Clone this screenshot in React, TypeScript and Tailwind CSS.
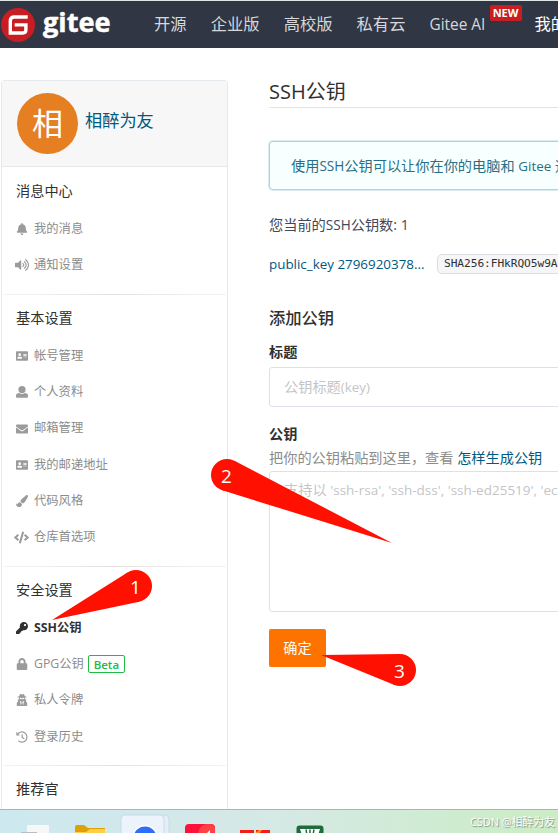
import type { ReactNode } from "react";
import {
  FaAddressCard,
  FaBell,
  FaCode,
  FaEnvelope,
  FaKey,
  FaLock,
  FaPaintBrush,
  FaUserSecret,
  FaVolumeUp,
} from "react-icons/fa";

type MenuItem = { label: string; icon: ReactNode; active?: boolean; badge?: string };

const navLinks = ["开源", "企业版", "高校版", "私有云"];

const menuSections: { title: string; items: MenuItem[] }[] = [
  {
    title: "消息中心",
    items: [
      { label: "我的消息", icon: <FaBell /> },
      { label: "通知设置", icon: <FaVolumeUp className="size-[14px]" /> },
    ],
  },
  {
    title: "基本设置",
    items: [
      { label: "帐号管理", icon: <FaAddressCard /> },
      { label: "个人资料", icon: <UserIcon /> },
      { label: "邮箱管理", icon: <FaEnvelope /> },
      { label: "我的邮递地址", icon: <FaAddressCard /> },
      { label: "代码风格", icon: <FaPaintBrush /> },
      { label: "仓库首选项", icon: <FaCode className="size-[15px]" /> },
    ],
  },
  {
    title: "安全设置",
    items: [
      { label: "SSH公钥", icon: <FaKey />, active: true },
      { label: "GPG公钥", icon: <FaLock />, badge: "Beta" },
      { label: "私人令牌", icon: <FaUserSecret /> },
      { label: "登录历史", icon: <HistoryIcon /> },
    ],
  },
];

const callouts = [
  { label: "1", cx: 136, cy: 586, tipX: 52, tipY: 620 },
  { label: "2", cx: 227, cy: 475, tipX: 392, tipY: 543 },
  { label: "3", cx: 400, cy: 670, tipX: 321, tipY: 655 },
];

function UserIcon() {
  return (
    <svg viewBox="0 0 12 12" className="size-3" fill="currentColor">
      <circle cx="6" cy="3.6" r="3.6" />
      <path d="M3.2 6.9Q6 9 8.8 6.9L10.7 7.6Q12 8.1 12 9.5V10.8Q12 11.7 11.1 11.7H.9Q0 11.7 0 10.8V9.5Q0 8.1 1.3 7.6Z" />
    </svg>
  );
}

function HistoryIcon() {
  return (
    <svg
      viewBox="0 0 12 12"
      className="size-3"
      fill="none"
      stroke="currentColor"
      strokeWidth="1.2"
    >
      <path d="M1.6 3.2A5.1 5.1 0 1 1 2.4 9.8M6.2 3.2V6.4L8.2 7.8" />
      <path d="M.3 .8V4.4H3.9Z" fill="currentColor" stroke="none" />
    </svg>
  );
}

function Logo() {
  return (
    <div className="flex w-[154px] shrink-0 items-center">
      <svg viewBox="0 0 34 34" className="ml-[1px] size-[34px] shrink-0">
        <circle cx="17" cy="17" r="17" fill="#c71d23" />
        <path
          d="M26.7 9H13.2Q9.3 9 9.3 12.9V25H21.7Q24.9 25 24.9 21.8V16.9H13.7"
          fill="none"
          stroke="#fff"
          strokeWidth="3.4"
        />
      </svg>
      <span className="relative -top-[3px] ml-[8px] text-[27.2px] font-bold leading-none text-white [-webkit-text-stroke:0.5px_#fff]">
        gitee
      </span>
    </div>
  );
}

function TopNav() {
  return (
    <header className="flex h-12 items-center overflow-hidden whitespace-nowrap border-t border-[#dfe6e6] bg-[#303643] text-[16.3px] text-[#d6d8dc]">
      <Logo />
      <nav className="flex items-center gap-[24.1px]">
        {navLinks.map((link) => (
          <a key={link}>{link}</a>
        ))}
        <a className="relative text-[15.4px]">
          Gitee AI
          <span className="absolute -top-[8px] left-[60px] flex h-4 w-8 items-center justify-center rounded-[2px] bg-[#c71d23] text-[11px] font-bold text-white">
            NEW
          </span>
        </a>
        <a className="ml-[25px] text-white">我的</a>
      </nav>
    </header>
  );
}

function Sidebar() {
  return (
    <aside className="ml-px mt-8 w-[227px] shrink-0 rounded-t border border-b-0 border-[#e3e9ed]">
      <div className="mb-px flex h-[86px] border-b border-[#e3e9ed] bg-[#f7f7f7] pl-[15px] pt-3">
        <div className="flex size-[61px] items-center justify-center rounded-full bg-[#e67e22] text-[31px] text-white">
          相
        </div>
        <a className="ml-[7px] pt-[14px] text-[17.2px] leading-7 text-[#005980]">相醉为友</a>
      </div>
      {menuSections.map((section) => (
        <section key={section.title}>
          <h4 className="h-[43px] pl-[14px] pt-[13px] text-[14.2px] leading-5 text-[#303030]">
            {section.title}
          </h4>
          {section.items.map((item) => (
            <a
              key={item.label}
              className={`flex h-[36.3px] items-center text-[12.3px] ${
                item.active ? "font-bold text-[#303030]" : "text-[#8c8c8c]"
              }`}
            >
              <span
                className={`ml-3 flex w-[15px] justify-center text-[12px] ${
                  item.active ? "text-[#303030]" : "text-[#9b9b9b]"
                }`}
              >
                {item.icon}
              </span>
              <span className="ml-[5px]">{item.label}</span>
              {item.badge && (
                <span className="ml-1 flex h-[18px] w-[37px] items-center justify-center rounded-[2px] border border-[#21ba45] text-[11.5px] font-semibold text-[#21ba45]">
                  {item.badge}
                </span>
              )}
            </a>
          ))}
          <div className="mx-px mt-[10.2px] h-px bg-gradient-to-r from-[#f4f4f4] via-[#e2e2e2] to-[#f4f4f4]" />
        </section>
      ))}
      <h4 className="pl-[14px] pt-[13px] text-[14.2px] leading-5 text-[#303030]">推荐官</h4>
    </aside>
  );
}

function KeySettings() {
  return (
    <main className="ml-[41px] mt-8 w-[400px] shrink-0 whitespace-nowrap text-[14.2px] text-[#40485b]">
      <h2 className="h-7 border-b border-[#e0e3e5] text-[20px] leading-[23px] text-[#303030]">
        SSH公钥
      </h2>
      <div className="mt-[33px] h-[49px] rounded border border-[#a9d5de] bg-[#f8ffff] pl-[21px] leading-[47px] text-[#276f86] shadow-[0_0_0_1px_#d9ecf0]">
        使用<span className="text-[13.6px]">SSH</span>公钥可以让你在你的电脑和{" "}
        <span className="text-[13.4px]">Gitee</span> 通讯的时候使用安全连接
      </div>
      <p className="mt-[23px] leading-6">
        您当前的<span className="text-[13.6px]">SSH</span>公钥数: 1
      </p>
      <div className="mt-[15px] flex h-6 items-center">
        <a className="w-[168px] text-[13.4px] text-[#005980]">public_key 2796920378...</a>
        <code className="flex h-5 items-center rounded-[5px] border border-[#dcdce2] bg-[#f6f6f8] pl-1.5 font-['DejaVu_Sans_Mono',monospace] text-[11.2px] tracking-[-0.06px] text-[#303030]">
          SHA256:FHkRQO5w9AJk3Lm8
        </code>
      </div>
      <h3 className="mt-[30px] text-[16.3px] font-medium leading-6 text-[#303030]">添加公钥</h3>
      <label className="mt-3 block font-bold leading-5 text-[#303030]">标题</label>
      <div className="mt-[5px] h-10 rounded-[3px] border border-[#dde0e6] pl-[14px] leading-[37px] text-[#c5c5c7]">
        公钥标题<span className="text-[13.4px]">(key)</span>
      </div>
      <label className="mt-[17px] block font-bold leading-5 text-[#303030]">公钥</label>
      <p className="mt-[4px] leading-5 text-[#8c8c8c]">
        把你的公钥粘贴到这里，查看 <a className="text-[#005980]">怎样生成公钥</a>
      </p>
      <div className="mt-[3px] h-[141px] rounded-[3px] border border-[#dde0e6] pl-[14px] pt-2 leading-5 text-[#c5c5c7]">
        支持以{" "}
        <span className="text-[13.5px]">
          'ssh-rsa', 'ssh-dss', 'ssh-ed25519', 'ecdsa-sha2-nistp256'
        </span>
      </div>
      <button className="mt-[17px] h-[38px] w-[57px] rounded-[2px] bg-[#fe7300] text-white">
        确定
      </button>
    </main>
  );
}

function Callouts() {
  const r = 16;
  return (
    <svg className="pointer-events-none absolute inset-0" width="558" height="833">
      {callouts.map(({ label, cx, cy, tipX, tipY }) => {
        // the wedge runs from the tip to both tangent points of the circle
        const distance = Math.hypot(tipX - cx, tipY - cy);
        const heading = Math.atan2(tipY - cy, tipX - cx);
        const spread = Math.acos(r / distance);
        const points = [heading - spread, heading + spread].map(
          (a) => `${cx + r * Math.cos(a)},${cy + r * Math.sin(a)}`,
        );
        return (
          <g key={label} fill="#ff1000">
            <circle cx={cx} cy={cy} r={r} />
            <polygon points={`${tipX},${tipY} ${points.join(" ")}`} />
            <text x={cx - 0.5} y={cy + 8} fill="#fff" fontSize="19" textAnchor="middle">
              {label}
            </text>
          </g>
        );
      })}
    </svg>
  );
}

function Taskbar() {
  return (
    <footer className="relative h-6 overflow-hidden border-t border-[#a9b5b8] bg-gradient-to-r from-[#cde8f0] via-[#d5e9e5] to-[#cbedc4]">
      <svg width="558" height="23" className="block">
        <rect x="27" y="15" width="22" height="12" rx="1" fill="#f7f7f7" />
        <rect x="21" y="22" width="16" height="4" fill="#b5bec2" />
        <path d="M75 25V17Q75 15 77 15H84L88 18H105V25Z" fill="#dda106" />
        <path d="M75 25V22H86L90 19H105V25Z" fill="#ffcd46" />
        <rect x="123" y="5" width="46" height="30" rx="4" fill="#e5edf7" stroke="#c9d9e6" />
        <rect x="121" y="5" width="43" height="30" rx="4" fill="#edf3fb" stroke="#c9dce8" />
        <circle cx="145" cy="28" r="13" fill="#fff" />
        <circle cx="145" cy="28" r="11.5" fill="#2f6dfa" />
        <rect x="185" y="14" width="30" height="20" rx="4" fill="#fc1238" />
        <path d="M198 23Q200 14 208 14Q215 14 215 19V23Z" fill="#ff4044" />
        <path d="M207 23L210 20V23Z" fill="#fff" />
        <path d="M240 20H254V24H240ZM256 20H270V24H256Z" fill="#f31c19" />
        <path d="M254 24L259 20H262L259 24Z" fill="#ff8b1f" />
        <rect x="297.5" y="16.5" width="25" height="14" rx="2" fill="#216b3a" stroke="#216b3a" strokeWidth="2" />
        <path d="M300 19H320L318 25H302Z" fill="#fff" />
        <path d="M306 19.5L307 25M310 19.5V25M314 19.5L313 25" stroke="#216b3a" strokeWidth="1.5" />
      </svg>
      <span className="absolute right-[3px] top-[4px] text-[10.9px] leading-4 text-white [text-shadow:1px_1px_1px_#7c8c80]">
        CSDN @相醉为友
      </span>
    </footer>
  );
}

export default function App() {
  return (
    <div className="relative h-[833px] w-[558px] overflow-hidden bg-white font-['Open_Sans','Noto_Sans_CJK_SC',sans-serif]">
      <TopNav />
      <div className="flex h-[761px] overflow-hidden">
        <Sidebar />
        <KeySettings />
      </div>
      <Taskbar />
      <Callouts />
    </div>
  );
}
